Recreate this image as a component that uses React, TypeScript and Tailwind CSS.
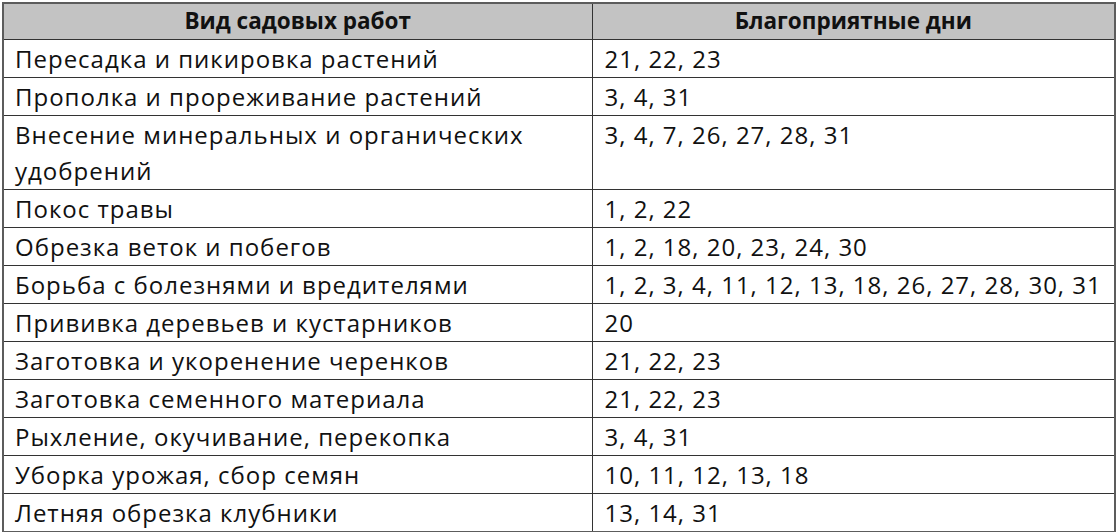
const ROWS: [string, string][] = [
  ["Пересадка и пикировка растений", "21, 22, 23"],
  ["Прополка и прореживание растений", "3, 4, 31"],
  ["Внесение минеральных и органических удобрений", "3, 4, 7, 26, 27, 28, 31"],
  ["Покос травы", "1, 2, 22"],
  ["Обрезка веток и побегов", "1, 2, 18, 20, 23, 24, 30"],
  ["Борьба с болезнями и вредителями", "1, 2, 3, 4, 11, 12, 13, 18, 26, 27, 28, 30, 31"],
  ["Прививка деревьев и кустарников", "20"],
  ["Заготовка и укоренение черенков", "21, 22, 23"],
  ["Заготовка семенного материала", "21, 22, 23"],
  ["Рыхление, окучивание, перекопка", "3, 4, 31"],
  ["Уборка урожая, сбор семян", "10, 11, 12, 13, 18"],
  ["Летняя обрезка клубники", "13, 14, 31"],
];

export default function App() {
  return (
    <div className="min-h-screen bg-white pt-[2px] pl-[2px] font-['Open_Sans',sans-serif] text-[24px] tracking-[1px] text-[#111]">
      <table className="w-[1114px] table-fixed border-collapse border-2 border-[#5c5c5c]">
        <colgroup>
          <col className="w-[589px]" />
          <col />
        </colgroup>
        <thead>
          <tr className="h-[36px] bg-[#c3c3c3]">
            <th className="border border-[#333] text-center text-[22.5px] font-bold tracking-normal leading-[34px]">
              Вид садовых работ
            </th>
            <th className="border border-[#333] text-center text-[22.5px] font-bold tracking-normal leading-[34px]">
              Благоприятные дни
            </th>
          </tr>
        </thead>
        <tbody>
          {ROWS.map(([work, days]) => (
            <tr key={work}>
              <td className="border border-[#333] pl-[11px] pr-2 pt-[1px] pb-0 align-top leading-[36px]">{work}</td>
              <td className="border border-[#333] pl-3 pt-[1px] pb-0 align-top leading-[36px]">{days}</td>
            </tr>
          ))}
        </tbody>
      </table>
    </div>
  );
}
